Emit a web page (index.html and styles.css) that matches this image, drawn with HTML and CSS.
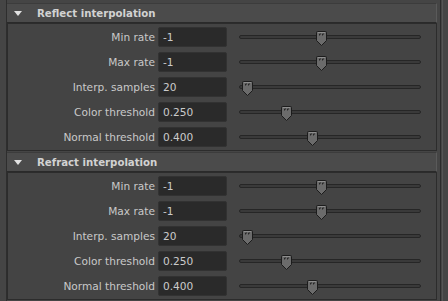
FILE: index.html
```html
<!DOCTYPE html>
<html lang="en">
<head>
  <meta charset="UTF-8" />
  <title>Interpolation settings</title>
  <link rel="stylesheet" href="styles.css">
</head>
<body>
  <div class="frame">
    <div class="main">

      <!-- reflect -->
      <section class="group">
        <div class="group-head"><span class="arrow"></span>Reflect interpolation</div>
        <div class="group-body">
          <div class="row">
            <label>Min rate</label>
            <input class="field" type="text" value="-1">
            <div class="slider"><div class="track"></div><svg class="thumb" style="left:77px" width="11" height="15" viewBox="0 0 11 15"><use href="#thumb"/></svg></div>
          </div>
          <div class="row">
            <label>Max rate</label>
            <input class="field" type="text" value="-1">
            <div class="slider"><div class="track"></div><svg class="thumb" style="left:77px" width="11" height="15" viewBox="0 0 11 15"><use href="#thumb"/></svg></div>
          </div>
          <div class="row">
            <label>Interp. samples</label>
            <input class="field" type="text" value="20">
            <div class="slider"><div class="track"></div><svg class="thumb" style="left:3px" width="11" height="15" viewBox="0 0 11 15"><use href="#thumb"/></svg></div>
          </div>
          <div class="row">
            <label>Color threshold</label>
            <input class="field" type="text" value="0.250">
            <div class="slider"><div class="track"></div><svg class="thumb" style="left:42px" width="11" height="15" viewBox="0 0 11 15"><use href="#thumb"/></svg></div>
          </div>
          <div class="row">
            <label>Normal threshold</label>
            <input class="field" type="text" value="0.400">
            <div class="slider"><div class="track"></div><svg class="thumb" style="left:68px" width="11" height="15" viewBox="0 0 11 15"><use href="#thumb"/></svg></div>
          </div>
        </div>
      </section>

      <!-- refract -->
      <section class="group">
        <div class="group-head"><span class="arrow"></span>Refract interpolation</div>
        <div class="group-body">
          <div class="row">
            <label>Min rate</label>
            <input class="field" type="text" value="-1">
            <div class="slider"><div class="track"></div><svg class="thumb" style="left:77px" width="11" height="15" viewBox="0 0 11 15"><use href="#thumb"/></svg></div>
          </div>
          <div class="row">
            <label>Max rate</label>
            <input class="field" type="text" value="-1">
            <div class="slider"><div class="track"></div><svg class="thumb" style="left:77px" width="11" height="15" viewBox="0 0 11 15"><use href="#thumb"/></svg></div>
          </div>
          <div class="row">
            <label>Interp. samples</label>
            <input class="field" type="text" value="20">
            <div class="slider"><div class="track"></div><svg class="thumb" style="left:3px" width="11" height="15" viewBox="0 0 11 15"><use href="#thumb"/></svg></div>
          </div>
          <div class="row">
            <label>Color threshold</label>
            <input class="field" type="text" value="0.250">
            <div class="slider"><div class="track"></div><svg class="thumb" style="left:42px" width="11" height="15" viewBox="0 0 11 15"><use href="#thumb"/></svg></div>
          </div>
          <div class="row">
            <label>Normal threshold</label>
            <input class="field" type="text" value="0.400">
            <div class="slider"><div class="track"></div><svg class="thumb" style="left:68px" width="11" height="15" viewBox="0 0 11 15"><use href="#thumb"/></svg></div>
          </div>
        </div>
      </section>

    </div>
    <div class="rail"></div>
  </div>

  <!-- shared slider handle -->
  <svg width="0" height="0" class="defs">
    <defs>
      <g id="thumb">
        <path d="M1.5 0.5h8a1 1 0 0 1 1 1v8l-5 5l-5-5v-8a1 1 0 0 1 1-1z" fill="#6b6b6b" stroke="#1c1c1c"/>
        <path d="M2 1.5h7" stroke="#8e8e8e"/>
        <path d="M3.5 4.5v-1.5h1.5M6.5 4.5v-1.5h1.5" stroke="#262626" fill="none"/>
      </g>
    </defs>
  </svg>
</body>
</html>
```

FILE: styles.css
```css
*{box-sizing:border-box;margin:0;padding:0}
body{
  background:#454545;
  font-family:"DejaVu Sans",Verdana,sans-serif;
  font-size:10.6px;
  color:#c9c9c9;
  height:301px;
  overflow:hidden;
}
.defs{position:absolute}
.frame{
  display:flex;
  height:301px;
  padding-left:6px;
}
.main{
  width:431px;
  border-left:1px solid #2e2e2e;
  padding-top:3px;
}
.rail{
  width:3px;
  margin-left:3px;
  border-left:1px solid #2b2b2b;
  border-right:1px solid #555;
}

/* ---------- collapsible group ---------- */
.group{margin-bottom:1px}
.group-head{
  height:20px;
  display:flex;
  align-items:center;
  background:#4b4b4b;
  border-top:1px solid #3c3c3c;
  border-bottom:1px solid #2a2a2a;
  border-right:1px solid #5a5a5a;
  font-weight:700;
  font-size:10.2px;
  color:#d2d2d2;
}
.arrow{
  width:0;height:0;
  margin:0 15px 0 7px;
  border-left:4.5px solid transparent;
  border-right:4.5px solid transparent;
  border-top:5px solid #e2e2e2;
}
.group-body{
  width:430px;
  background:#444;
  border:1px solid #2c2c2c;
  padding:3px 15px 3px 0;
  display:flex;
  flex-direction:column;
  gap:5px;
}

/* ---------- rows ---------- */
.row{
  height:20px;
  display:grid;
  grid-template-columns:147px 69px 191px;
  column-gap:3px;
  align-items:center;
}
.row label{text-align:right;white-space:nowrap}
.field{
  height:20px;
  width:69px;
  background:#2a2a2a;
  border:1px solid #323232;
  border-radius:2px;
  color:#cacaca;
  font:inherit;
  padding-left:4px;
  outline:none;
}
.slider{
  position:relative;
  height:20px;
  margin-left:9px;
  display:flex;
  align-items:center;
}
.track{
  width:100%;
  height:4px;
  margin-top:-1px;
  background:#3a3a3a;
  border:1px solid #262626;
  border-radius:2px;
}
.thumb{
  position:absolute;
  top:4px;
}
```
